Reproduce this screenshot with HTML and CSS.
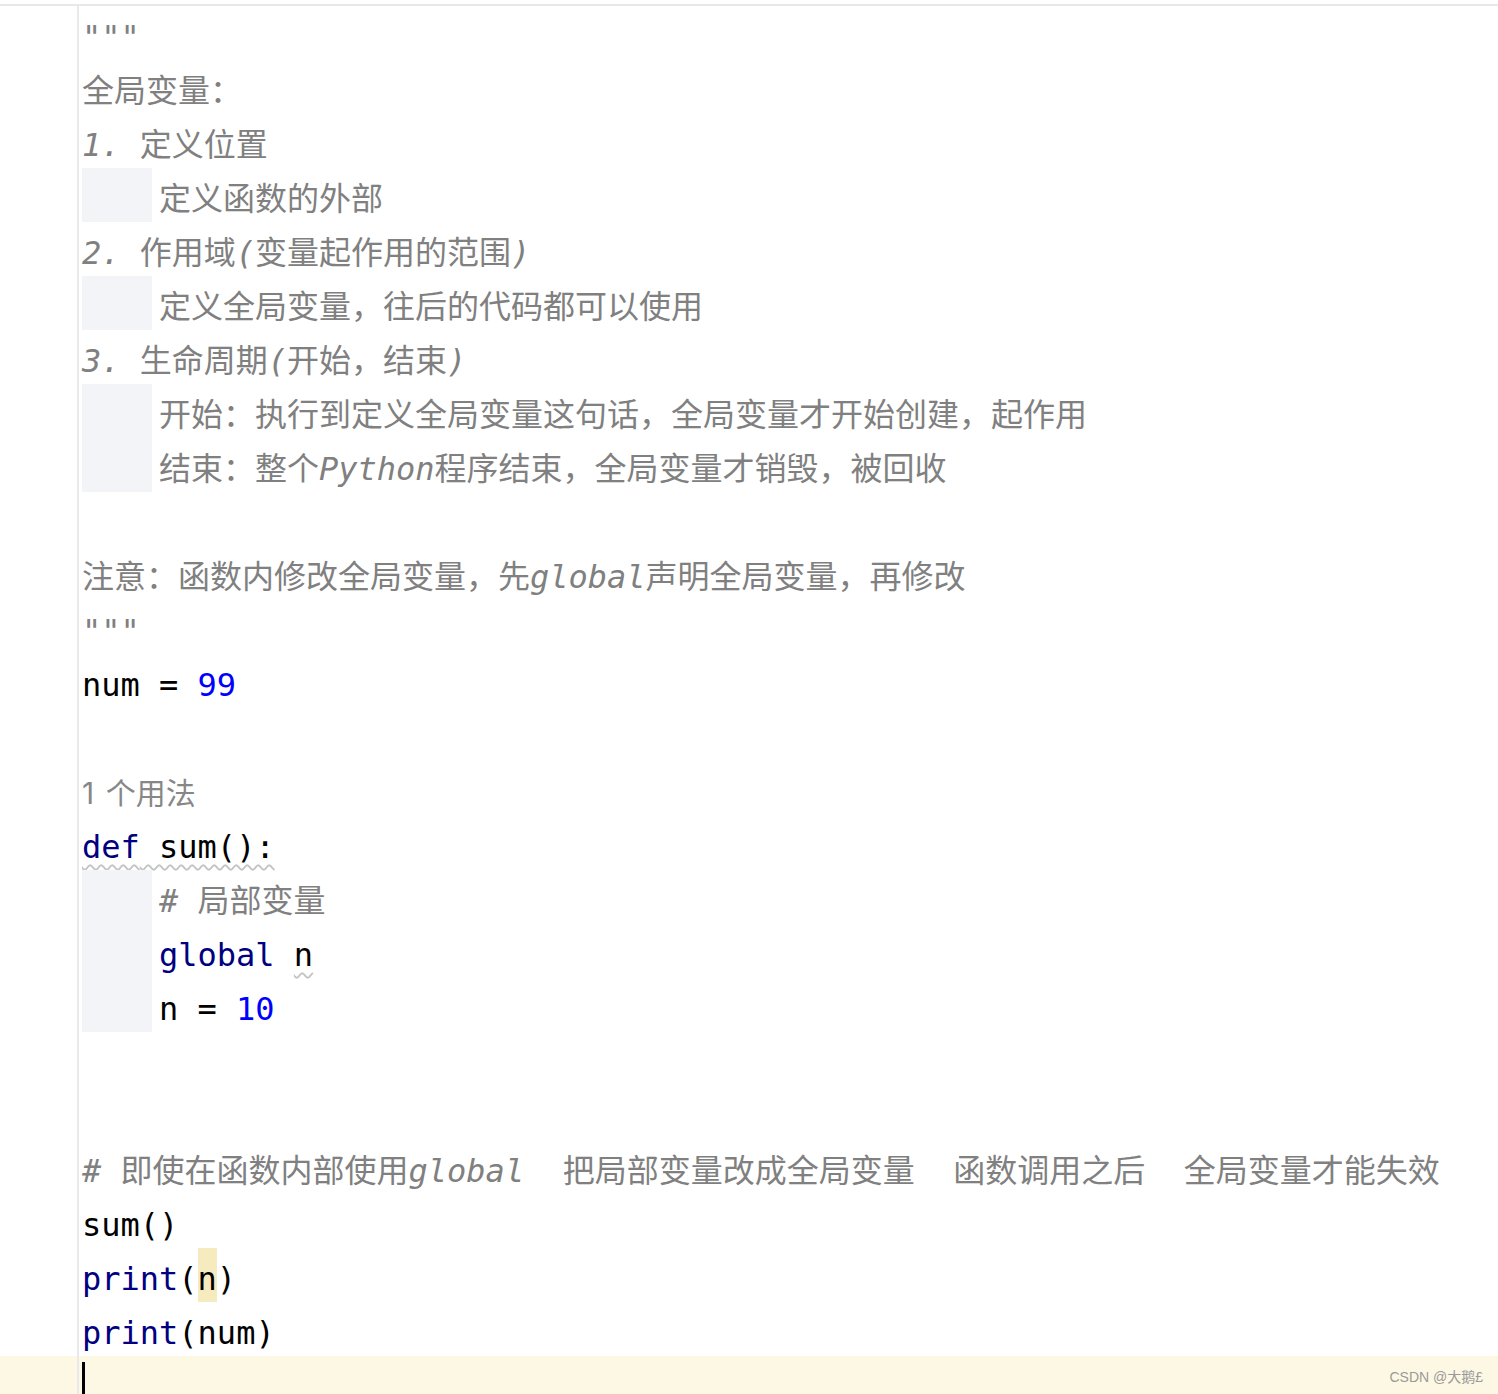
FILE: index.html
```html
<!DOCTYPE html>
<html lang="zh">
<head>
<meta charset="utf-8">
<title>global</title>
<link rel="stylesheet" href="styles.css">
</head>
<body>
<div class="editor">
  <div class="row"><div class="gutter"></div><div class="code"><span class="t doc"><i>"""</i></span></div></div>
  <div class="row"><div class="gutter"></div><div class="code"><span class="t doc">全局变量：</span></div></div>
  <div class="row"><div class="gutter"></div><div class="code"><span class="t doc"><i>1. </i>定义位置</span></div></div>
  <div class="row"><div class="gutter"></div><div class="code"><span class="indent"></span><span class="t doc">定义函数的外部</span></div></div>
  <div class="row"><div class="gutter"></div><div class="code"><span class="t doc"><i>2. </i>作用域<i>(</i>变量起作用的范围<i>)</i></span></div></div>
  <div class="row"><div class="gutter"></div><div class="code"><span class="indent"></span><span class="t doc">定义全局变量，往后的代码都可以使用</span></div></div>
  <div class="row"><div class="gutter"></div><div class="code"><span class="t doc"><i>3. </i>生命周期<i>(</i>开始，结束<i>)</i></span></div></div>
  <div class="row"><div class="gutter"></div><div class="code"><span class="indent"></span><span class="t doc">开始：执行到定义全局变量这句话，全局变量才开始创建，起作用</span></div></div>
  <div class="row"><div class="gutter"></div><div class="code"><span class="indent"></span><span class="t doc">结束：整个<i>Python</i>程序结束，全局变量才销毁，被回收</span></div></div>
  <div class="row"><div class="gutter"></div><div class="code"></div></div>
  <div class="row"><div class="gutter"></div><div class="code"><span class="t doc">注意：函数内修改全局变量，先<i>global</i>声明全局变量，再修改</span></div></div>
  <div class="row"><div class="gutter"></div><div class="code"><span class="t doc"><i>"""</i></span></div></div>
  <div class="row"><div class="gutter"></div><div class="code"><span class="t">num = <span class="num">99</span></span></div></div>
  <div class="row"><div class="gutter"></div><div class="code"></div></div>
  <div class="row"><div class="gutter"></div><div class="code"><span class="hint">1 个用法</span></div></div>
  <div class="row"><div class="gutter"></div><div class="code"><span class="t"><span class="warn"><span class="kw">def</span> sum():</span></span></div></div>
  <div class="row"><div class="gutter"></div><div class="code"><span class="indent"></span><span class="t cm"><i>#</i> 局部变量</span></div></div>
  <div class="row"><div class="gutter"></div><div class="code"><span class="indent"></span><span class="t"><span class="kw">global</span> <span class="warn">n</span></span></div></div>
  <div class="row"><div class="gutter"></div><div class="code"><span class="indent"></span><span class="t">n = <span class="num">10</span></span></div></div>
  <div class="row"><div class="gutter"></div><div class="code"></div></div>
  <div class="row"><div class="gutter"></div><div class="code"></div></div>
  <div class="row"><div class="gutter"></div><div class="code"><span class="t cm"><i>#</i> 即使在函数内部使用<i>global  </i>把局部变量改成全局变量<i>  </i>函数调用之后<i>  </i>全局变量才能失效</span></div></div>
  <div class="row"><div class="gutter"></div><div class="code"><span class="t">sum()</span></div></div>
  <div class="row"><div class="gutter"></div><div class="code"><span class="t"><span class="kw">print</span>(<span class="mark">n</span>)</span></div></div>
  <div class="row"><div class="gutter"></div><div class="code"><span class="t"><span class="kw">print</span>(num)</span></div></div>
  <div class="row current"><div class="gutter"></div><div class="code"><span class="caret"></span></div></div>
</div>
<div class="watermark">CSDN @大鹅£</div>
</body>
</html>
```
FILE: styles.css
```css
html, body {
  margin: 0;
  padding: 0;
  background: #ffffff;
  overflow: hidden;
}

body {
  width: 1498px;
  height: 1394px;
  position: relative;
}

.editor {
  margin-top: 4px;
  border-top: 2px solid #e8e8ec;
  width: 1498px;
}

.row {
  display: flex;
  height: 54px;
}

.row.current {
  background: #fdf8e3;
}

.gutter {
  flex: 0 0 77px;
  border-right: 2px solid #e9e9e9;
}

.code {
  flex: 1;
  display: flex;
  padding-left: 3px;
  font-family: "DejaVu Sans Mono", "Noto Sans CJK SC", monospace;
  font-size: 32px;
  color: #000000;
}

.t {
  display: block;
  white-space: pre;
  line-height: 54px;
  padding-top: 4px;
}

.indent {
  flex: 0 0 77px;
  background: linear-gradient(to right, #f3f4f8 70px, transparent 70px);
}

.doc, .cm {
  color: #808080;
}

.doc i, .cm i {
  font-style: italic;
}

.kw {
  color: #000080;
}

.num {
  color: #0000ff;
}

.warn {
  text-decoration: underline wavy #c4c4c4;
  text-decoration-thickness: 1.5px;
  text-underline-offset: 6px;
}

.mark {
  display: inline-block;
  background: #f6ebbf;
  line-height: 54px;
  vertical-align: top;
  margin-top: -4px;
  height: 54px;
  padding-top: 4px;
  box-sizing: border-box;
}

.hint {
  display: block;
  font-family: "Inter", "Noto Sans CJK SC", sans-serif;
  font-size: 30px;
  word-spacing: 3px;
  color: #878787;
  line-height: 54px;
  padding-top: 4px;
}

.caret {
  display: block;
  width: 3px;
  height: 34px;
  margin-top: 6px;
  background: #000000;
}

.watermark {
  position: absolute;
  right: 15px;
  bottom: 8px;
  font-family: "Liberation Sans", "Noto Sans CJK SC", sans-serif;
  font-size: 14px;
  color: #9a9a9a;
}
```
